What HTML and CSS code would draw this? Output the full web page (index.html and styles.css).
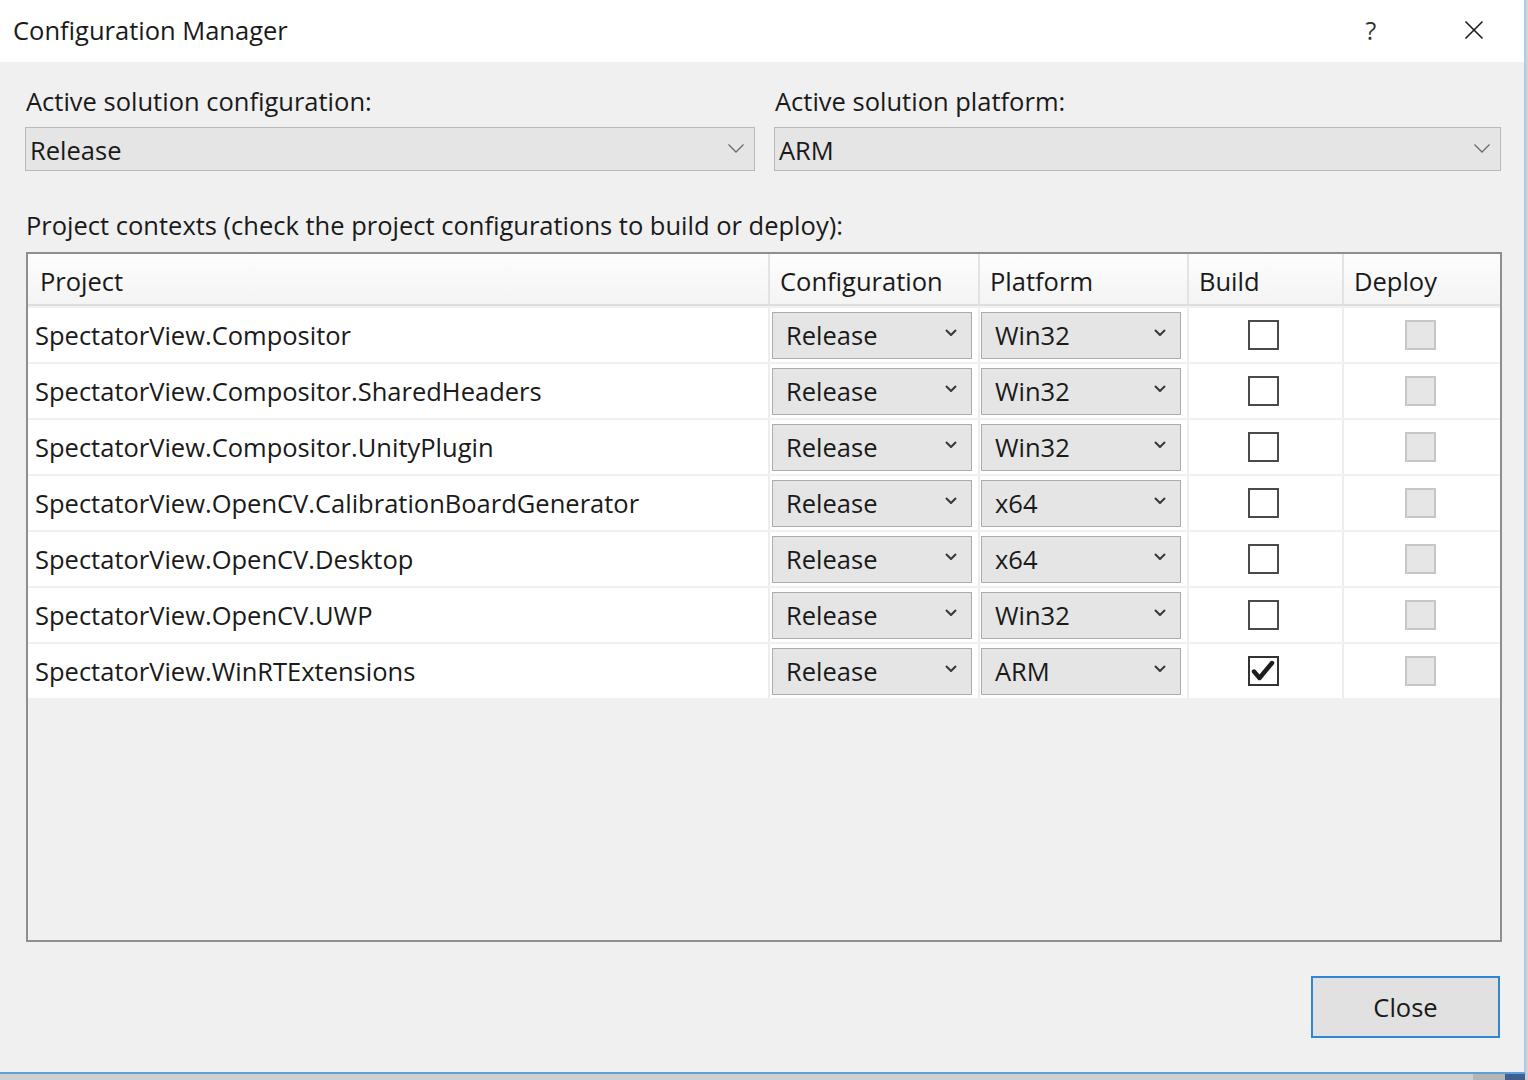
FILE: index.html
```html
<!DOCTYPE html>
<html>
<head>
<meta charset="utf-8">
<title>Configuration Manager</title>
<link rel="stylesheet" href="styles.css">
</head>
<body>
<div class="screen">
  <div class="window">
    <div class="titlebar">
      <div class="title">Configuration Manager</div>
      <div class="tb-btn help">?</div>
      <div class="tb-btn close">
        <svg width="20" height="20" viewBox="0 0 20 20"><path d="M1.5 1.5 L18.5 18.5 M18.5 1.5 L1.5 18.5" stroke="#1a1a1a" stroke-width="1.6" fill="none"/></svg>
      </div>
    </div>
    <div class="content">
      <div class="top">
        <div class="field">
          <div class="label">Active solution configuration:</div>
          <div class="combo big"><span>Release</span><svg class="chev-big" width="16" height="9" viewBox="0 0 16 9"><path d="M0.5 0.5 L8 8 L15.5 0.5" stroke="#6a6a6a" stroke-width="1.3" fill="none"/></svg></div>
        </div>
        <div class="field">
          <div class="label">Active solution platform:</div>
          <div class="combo big"><span>ARM</span><svg class="chev-big" width="16" height="9" viewBox="0 0 16 9"><path d="M0.5 0.5 L8 8 L15.5 0.5" stroke="#6a6a6a" stroke-width="1.3" fill="none"/></svg></div>
        </div>
      </div>
      <div class="label ctx">Project contexts (check the project configurations to build or deploy):</div>
      <div class="grid">
        <div class="row head">
          <div class="hcell c-proj">Project</div>
          <div class="hcell">Configuration</div>
          <div class="hcell">Platform</div>
          <div class="hcell">Build</div>
          <div class="hcell">Deploy</div>
        </div>

        <div class="row">
          <div class="cell c-proj">SpectatorView.Compositor</div>
          <div class="cell c-combo"><div class="combo small"><span>Release</span><svg class="chev" width="12" height="7" viewBox="0 0 12 7"><path d="M1 1 L6 6 L11 1" stroke="#3a3a3a" stroke-width="2.1" fill="none"/></svg></div></div>
          <div class="cell c-combo c-plat"><div class="combo small"><span>Win32</span><svg class="chev" width="12" height="7" viewBox="0 0 12 7"><path d="M1 1 L6 6 L11 1" stroke="#3a3a3a" stroke-width="2.1" fill="none"/></svg></div></div>
          <div class="cell c-check"><div class="box"></div></div>
          <div class="cell c-check c-dep"><div class="box disabled"></div></div>
        </div>

        <div class="row">
          <div class="cell c-proj">SpectatorView.Compositor.SharedHeaders</div>
          <div class="cell c-combo"><div class="combo small"><span>Release</span><svg class="chev" width="12" height="7" viewBox="0 0 12 7"><path d="M1 1 L6 6 L11 1" stroke="#3a3a3a" stroke-width="2.1" fill="none"/></svg></div></div>
          <div class="cell c-combo c-plat"><div class="combo small"><span>Win32</span><svg class="chev" width="12" height="7" viewBox="0 0 12 7"><path d="M1 1 L6 6 L11 1" stroke="#3a3a3a" stroke-width="2.1" fill="none"/></svg></div></div>
          <div class="cell c-check"><div class="box"></div></div>
          <div class="cell c-check c-dep"><div class="box disabled"></div></div>
        </div>

        <div class="row">
          <div class="cell c-proj">SpectatorView.Compositor.UnityPlugin</div>
          <div class="cell c-combo"><div class="combo small"><span>Release</span><svg class="chev" width="12" height="7" viewBox="0 0 12 7"><path d="M1 1 L6 6 L11 1" stroke="#3a3a3a" stroke-width="2.1" fill="none"/></svg></div></div>
          <div class="cell c-combo c-plat"><div class="combo small"><span>Win32</span><svg class="chev" width="12" height="7" viewBox="0 0 12 7"><path d="M1 1 L6 6 L11 1" stroke="#3a3a3a" stroke-width="2.1" fill="none"/></svg></div></div>
          <div class="cell c-check"><div class="box"></div></div>
          <div class="cell c-check c-dep"><div class="box disabled"></div></div>
        </div>

        <div class="row">
          <div class="cell c-proj">SpectatorView.OpenCV.CalibrationBoardGenerator</div>
          <div class="cell c-combo"><div class="combo small"><span>Release</span><svg class="chev" width="12" height="7" viewBox="0 0 12 7"><path d="M1 1 L6 6 L11 1" stroke="#3a3a3a" stroke-width="2.1" fill="none"/></svg></div></div>
          <div class="cell c-combo c-plat"><div class="combo small"><span>x64</span><svg class="chev" width="12" height="7" viewBox="0 0 12 7"><path d="M1 1 L6 6 L11 1" stroke="#3a3a3a" stroke-width="2.1" fill="none"/></svg></div></div>
          <div class="cell c-check"><div class="box"></div></div>
          <div class="cell c-check c-dep"><div class="box disabled"></div></div>
        </div>

        <div class="row">
          <div class="cell c-proj">SpectatorView.OpenCV.Desktop</div>
          <div class="cell c-combo"><div class="combo small"><span>Release</span><svg class="chev" width="12" height="7" viewBox="0 0 12 7"><path d="M1 1 L6 6 L11 1" stroke="#3a3a3a" stroke-width="2.1" fill="none"/></svg></div></div>
          <div class="cell c-combo c-plat"><div class="combo small"><span>x64</span><svg class="chev" width="12" height="7" viewBox="0 0 12 7"><path d="M1 1 L6 6 L11 1" stroke="#3a3a3a" stroke-width="2.1" fill="none"/></svg></div></div>
          <div class="cell c-check"><div class="box"></div></div>
          <div class="cell c-check c-dep"><div class="box disabled"></div></div>
        </div>

        <div class="row">
          <div class="cell c-proj">SpectatorView.OpenCV.UWP</div>
          <div class="cell c-combo"><div class="combo small"><span>Release</span><svg class="chev" width="12" height="7" viewBox="0 0 12 7"><path d="M1 1 L6 6 L11 1" stroke="#3a3a3a" stroke-width="2.1" fill="none"/></svg></div></div>
          <div class="cell c-combo c-plat"><div class="combo small"><span>Win32</span><svg class="chev" width="12" height="7" viewBox="0 0 12 7"><path d="M1 1 L6 6 L11 1" stroke="#3a3a3a" stroke-width="2.1" fill="none"/></svg></div></div>
          <div class="cell c-check"><div class="box"></div></div>
          <div class="cell c-check c-dep"><div class="box disabled"></div></div>
        </div>

        <div class="row">
          <div class="cell c-proj">SpectatorView.WinRTExtensions</div>
          <div class="cell c-combo"><div class="combo small"><span>Release</span><svg class="chev" width="12" height="7" viewBox="0 0 12 7"><path d="M1 1 L6 6 L11 1" stroke="#3a3a3a" stroke-width="2.1" fill="none"/></svg></div></div>
          <div class="cell c-combo c-plat"><div class="combo small"><span>ARM</span><svg class="chev" width="12" height="7" viewBox="0 0 12 7"><path d="M1 1 L6 6 L11 1" stroke="#3a3a3a" stroke-width="2.1" fill="none"/></svg></div></div>
          <div class="cell c-check"><div class="box checked"><svg width="27" height="26" viewBox="0 0 27 26"><path d="M4 13.5 L9.5 20 L22 5" stroke="#1c1c1c" stroke-width="4.4" fill="none" stroke-linejoin="round" stroke-linecap="round"/></svg></div></div>
          <div class="cell c-check c-dep"><div class="box disabled"></div></div>
        </div>
      </div>
      <div class="footer">
        <button class="btn">Close</button>
      </div>
    </div>
  </div>
  <div class="strip"><div class="strip-light"></div><div class="strip-blue"></div></div>
</div>
</body>
</html>
```

FILE: styles.css
```css
* { box-sizing: border-box; }

html, body {
  margin: 0;
  padding: 0;
}

body {
  width: 1528px;
  height: 1080px;
  overflow: hidden;
  background: #d4d4d4;
  font-family: "Open Sans", "Noto Sans", sans-serif;
  font-size: 25.5px;
  color: #1a1a1a;
}

.screen {
  width: 1528px;
  height: 1080px;
  display: flex;
  flex-direction: column;
}

.window {
  width: 1526px;
  height: 1074px;
  border-right: 2px solid #a6cdee;
  border-bottom: 2px solid #5d9fd8;
  background: #f0f0f0;
  display: flex;
  flex-direction: column;
}

.titlebar {
  height: 62px;
  background: #ffffff;
  display: flex;
  align-items: center;
  padding-left: 13px;
  flex: none;
}

.title {
  font-size: 25.5px;
  line-height: 36px;
  margin-top: -2px;
  color: #1a1a1a;
}

.tb-btn {
  width: 60px;
  height: 62px;
  display: flex;
  align-items: center;
  justify-content: center;
}

.help {
  margin-left: auto;
  font-size: 25px;
  color: #333;
  padding-bottom: 2px;
}

.close {
  margin-left: 43px;
  margin-right: 20px;
  padding-bottom: 2px;
}

.content {
  flex: 1;
  padding-left: 25px;
  display: flex;
  flex-direction: column;
}

.top {
  display: grid;
  grid-template-columns: 730px 727px;
  column-gap: 19px;
  margin-top: 21px;
}

.field {
  display: flex;
  flex-direction: column;
}

.label {
  line-height: 36px;
  padding-left: 1px;
  white-space: nowrap;
}

.combo {
  display: flex;
  align-items: center;
  background: #e5e5e5;
  border: 1px solid #b9b9b9;
  white-space: nowrap;
}

.combo span {
  flex: 1;
}

.combo.big {
  margin-top: 8px;
  height: 44px;
  padding-left: 4px;
  padding-right: 10px;
  padding-top: 2px;
}

.chev-big {
  margin-top: -3px;
}

.ctx {
  margin-top: 36px;
}

.grid {
  margin-top: 9px;
  margin-left: 1px;
  width: 1476px;
  height: 690px;
  border: 2px solid #8e8e8e;
  background: #f0f0f0;
  display: flex;
  flex-direction: column;
  gap: 2px;
}

.row {
  display: grid;
  grid-template-columns: 740px 208px 207px 153px 156px;
  column-gap: 2px;
  height: 54px;
  background: #ededed;
}

.row.head {
  height: 52px;
  background: #e3e3e3;
  border-bottom: 2px solid #dedede;
}

.hcell {
  background: linear-gradient(#fdfdfd, #f4f4f4);
  display: flex;
  align-items: center;
  padding-left: 10px;
  padding-top: 4px;
  white-space: nowrap;
}

.hcell.c-proj {
  padding-left: 12px;
}

.cell {
  background: #ffffff;
  display: flex;
  align-items: center;
  white-space: nowrap;
}

.cell.c-proj {
  padding-left: 7px;
}

.cell.c-combo {
  padding: 0 0 0 2px;
}

.cell.c-plat {
  padding-left: 1px;
}

.combo.small {
  width: 200px;
  height: 47px;
  padding-left: 13px;
  padding-right: 14px;
  border-color: #acacac;
}

.chev {
  margin-top: -6px;
}

.cell.c-check {
  justify-content: center;
  padding-right: 4px;
}

.box {
  width: 31px;
  height: 30px;
  border: 2px solid #4a4a4a;
  background: #ffffff;
  display: flex;
  align-items: center;
  justify-content: center;
}

.box.checked {
  border-color: #333333;
}

.box.disabled {
  background: #e6e6e6;
  border-color: #c6c6c6;
}

.footer {
  margin-top: 34px;
  display: flex;
  justify-content: flex-end;
  padding-right: 24px;
}

.btn {
  width: 189px;
  height: 62px;
  background: #e1e1e1;
  border: 2px solid #2f87d4;
  font-family: "Open Sans", "Noto Sans", sans-serif;
  font-size: 25.5px;
  color: #1a1a1a;
  padding: 0;
  margin: 0;
}

.strip {
  flex: 1;
  display: flex;
  background: #cfcfcf;
}

.strip-light {
  margin-left: auto;
  width: 32px;
  background: #b4b4b4;
}

.strip-blue {
  width: 20px;
  margin-right: 3px;
  background: #3f5f8f;
}
```
